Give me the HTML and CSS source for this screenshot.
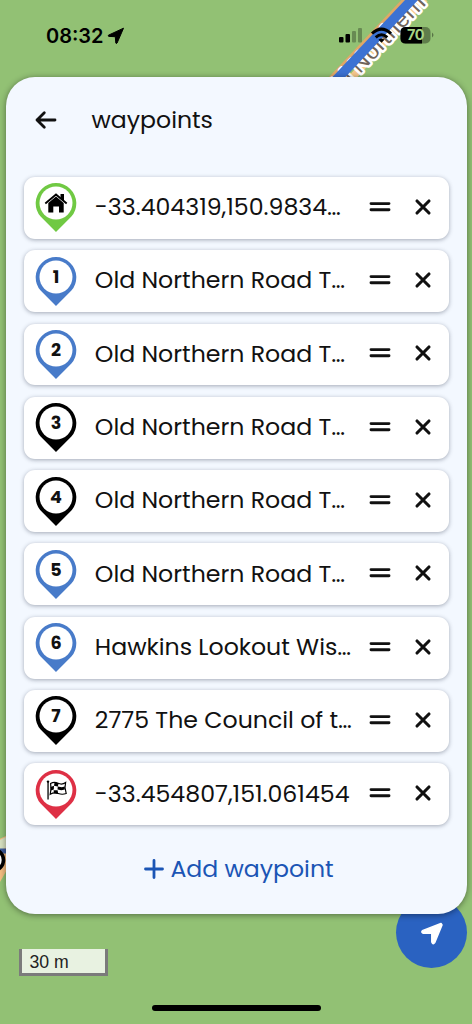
FILE: index.html
```html
<!DOCTYPE html>
<html lang="en">
<head>
<meta charset="utf-8">
<title>Waypoints</title>
<link rel="stylesheet" href="styles.css">
</head>
<body>
<svg class="defs" width="0" height="0" aria-hidden="true">
  <symbol id="pin" viewBox="0 0 42 51"><path d="M21 50 5.600 34.600A20.300 20.300 0 1 1 36.400 34.600Z" fill="currentColor"/><circle cx="21" cy="21" r="16.500" fill="#fff"/></symbol>
  <symbol id="drag" viewBox="0 0 22 12"><path d="M2 2.600H20M2 8.800H20" stroke="#111" stroke-width="2.900" stroke-linecap="round"/></symbol>
  <symbol id="close" viewBox="0 0 18 18"><path d="M3 3 15 15M15 3 3 15" stroke="#111" stroke-width="3.100" stroke-linecap="round"/></symbol>
</svg>
<div class="screen">
  <svg class="map" viewBox="0 0 472 1024">
    <path d="M326 83 405 -1" stroke="#e0a866" stroke-width="4"/>
    <path d="M347 83 425 -1" stroke="#f7c98e" stroke-width="7"/>
    <g class="road-name" transform="translate(356.500 78) rotate(-46.500)"><text x="-1" text-anchor="end">Old</text><text x="5">Northern</text></g>
    <path d="M330.500 86 420 -9" stroke="#3c72d3" stroke-width="9.500"/>
    <path d="M-3 840 8 835V868L0 882Z" fill="#f3bc80"/>
    <path d="M-2 841 8 836V847L-2 851Z" fill="#d6e0c0"/>
    <path d="M0 851H9" stroke="#3d5c9c" stroke-width="5"/>
    <circle cx="-7" cy="860" r="10.500" fill="#fff" stroke="#000" stroke-width="3.600"/>
  </svg>
  <header class="status">
    <span class="time">08:32</span>
    <svg class="arrow" width="18" height="18" viewBox="0 0 18 18"><path d="M16.500 1.200 1.400 8.200Q.7 9 1.900 9.400L8.300 9.700 8.800 16Q9.300 17.200 10.100 16Z" stroke="#000" stroke-linejoin="round"/></svg>
    <svg class="signals" width="98" height="24" viewBox="0 0 98 24">
      <rect x="1" y="13" width="4.500" height="5.500" rx="1"/><rect x="7.500" y="10" width="4.500" height="8.500" rx="1"/>
      <g opacity=".28"><rect x="14" y="7" width="4" height="11.500" rx="1"/><rect x="20" y="4" width="4" height="14.500" rx="1"/></g>
      <g fill="none" stroke="#000" stroke-width="3"><path d="M34 9.500Q43.500 .8 53 9.500M37.700 13.300Q43.500 8.300 49.300 13.300"/></g><path d="M40.500 15.700Q43.500 13.200 46.500 15.700L43.500 18.800Z"/>
      <rect x="62.500" y="3" width="30" height="16.500" rx="5" opacity=".35"/><path d="M67.500 3H84V19.500H67.500Q62.500 19.500 62.500 14.500V8Q62.500 3 67.500 3Z"/><path d="M94 8.500Q97 11 94 13.500Z" opacity=".4"/>
      <text class="battery" x="69" y="16.300">70</text>
    </svg>
  </header>
  <main class="panel">
    <div class="title">
      <svg width="22" height="20" viewBox="0 0 22 20"><path d="M20 10H2M9.300 2.700 2 10 9.300 17.300" fill="none" stroke="#111" stroke-width="2.800" stroke-linecap="round" stroke-linejoin="round"/></svg>
      <h1>waypoints</h1>
    </div>
    <div class="list">
      <div class="card"><svg class="pin green" viewBox="0 0 42 51"><use href="#pin"/><g class="ink"><path d="m10.300 21.400 10.700-9 10.700 9" fill="none" stroke="#000" stroke-width="1.900"/><path d="M25.500 12H29V19L25.500 16ZM21 14.500 28.700 21V30.500H24V24.500H18.300V30.500H13.300V21Z"/></g></svg><span class="name">-33.404319,150.9834…</span><svg class="drag"><use href="#drag"/></svg><svg class="close"><use href="#close"/></svg></div>
      <div class="card"><svg class="pin blue" viewBox="0 0 42 51"><use href="#pin"/><text x="21" y="27">1</text></svg><span class="name">Old Northern Road T…</span><svg class="drag"><use href="#drag"/></svg><svg class="close"><use href="#close"/></svg></div>
      <div class="card"><svg class="pin blue" viewBox="0 0 42 51"><use href="#pin"/><text x="21" y="27">2</text></svg><span class="name">Old Northern Road T…</span><svg class="drag"><use href="#drag"/></svg><svg class="close"><use href="#close"/></svg></div>
      <div class="card"><svg class="pin" viewBox="0 0 42 51"><use href="#pin"/><text x="21" y="27">3</text></svg><span class="name">Old Northern Road T…</span><svg class="drag"><use href="#drag"/></svg><svg class="close"><use href="#close"/></svg></div>
      <div class="card"><svg class="pin" viewBox="0 0 42 51"><use href="#pin"/><text x="21" y="27">4</text></svg><span class="name">Old Northern Road T…</span><svg class="drag"><use href="#drag"/></svg><svg class="close"><use href="#close"/></svg></div>
      <div class="card"><svg class="pin blue" viewBox="0 0 42 51"><use href="#pin"/><text x="21" y="27">5</text></svg><span class="name">Old Northern Road T…</span><svg class="drag"><use href="#drag"/></svg><svg class="close"><use href="#close"/></svg></div>
      <div class="card"><svg class="pin blue" viewBox="0 0 42 51"><use href="#pin"/><text x="21" y="27">6</text></svg><span class="name">Hawkins Lookout Wis…</span><svg class="drag"><use href="#drag"/></svg><svg class="close"><use href="#close"/></svg></div>
      <div class="card"><svg class="pin" viewBox="0 0 42 51"><use href="#pin"/><text x="21" y="27">7</text></svg><span class="name">2775 The Council of t…</span><svg class="drag"><use href="#drag"/></svg><svg class="close"><use href="#close"/></svg></div>
      <div class="card"><svg class="pin red" viewBox="0 0 42 51"><use href="#pin"/><g class="ink"><circle cx="13" cy="12.600" r="1.200"/><path d="M12.400 12.500h1.300v18h-1.300Z"/><path d="M15.600 14.500q3.500-2 7.500-.2t7.500-.8l-.6 5 1.200 6q-4 1.500-8 0t-8 .8l.8-5.500Z" fill="none" stroke="#000" stroke-width="1.200"/><path d="m19.500 13.500 4.200.8-.9 3.200-3.800-.7ZM15.500 18l3.500-1.300-.2 3.800-3 1ZM22.800 17.500l4 .8 3-.8v3l-3.500.8-3.800-.8ZM18.600 21.300l4-.1.600 3.600-4.300-.5Z"/></g></svg><span class="name">-33.454807,151.061454</span><svg class="drag"><use href="#drag"/></svg><svg class="close"><use href="#close"/></svg></div>
    </div>
    <div class="add"><svg width="20" height="20" viewBox="0 0 20 20"><path d="M10 1.500V18.500M1.500 10H18.500" stroke="#1b55b5" stroke-width="2.800" stroke-linecap="round"/></svg><span>Add waypoint</span></div>
  </main>
  <div class="scale">30 m</div>
  <div class="locate"><svg width="26" height="26" viewBox="0 0 26 26"><path d="M22 3.500 4 10.400Q1.500 12 4.200 13.200H12.800V22Q14 25 15.700 22.600L23 5Z" fill="#fff" stroke="#fff" stroke-width="1.500" stroke-linejoin="round"/></svg></div>
  <div class="home"></div>
</div>
</body>
</html>
```

FILE: styles.css
```css
* { box-sizing: border-box; }
body { margin: 0; font-family: Poppins, Inter, sans-serif; color: #111; }
svg { display: block; flex: none; }
.defs { position: absolute; }
.screen { position: relative; width: 472px; height: 1024px; overflow: hidden; background: #92c174; display: flex; flex-direction: column; }
.map { position: absolute; inset: 0; width: 472px; height: 1024px; }
.road-name { font: 23.5px "Liberation Sans", sans-serif; letter-spacing: .8px; fill: #70645a; stroke: #fff; stroke-width: 5px; stroke-linejoin: round; paint-order: stroke; }
.status { position: relative; height: 77px; flex: none; display: flex; padding: 24px 36.500px 0 46px; color: #000; }
.time { width: 58px; font: 600 20px/24px Inter, sans-serif; white-space: nowrap; }
.arrow { margin: 2.500px 0 0 3px; }
.signals { margin-left: auto; width: 98px; }
.battery { font: 700 14.5px Inter, sans-serif; fill: #a6d385; letter-spacing: -.5px; }
.panel { position: relative; z-index: 2; width: 461px; height: 836.500px; margin-left: 6px; flex: none; padding: 0 18px 0 17.500px; border-radius: 29px; background: #f3f8ff; box-shadow: 0 1px 6px rgba(0, 0, 0, .45); }
.title { height: 100px; display: flex; align-items: center; padding: 0 0 14px 11px; }
h1 { margin: 0 0 0 35px; font-size: 23.6px; font-weight: 400; line-height: 30px; }
.list { display: grid; gap: 11.500px; }
.card { height: 61.800px; display: flex; align-items: center; padding: 0 17px 0 11.800px; border-radius: 11px; background: #fff; box-shadow: 0 1px 4px rgba(40, 50, 70, .4); }
.pin { width: 42px; height: 51px; margin-top: 0; color: #000; }
.pin text { font: 700 17.5px Poppins, Inter, sans-serif; text-anchor: middle; fill: #111; }
.ink { fill: #000; }
.green { color: #70c943; }
.blue { color: #487bc9; }
.red { color: #de3045; }
.name { width: 257px; margin: -1.500px 0 0 17.500px; font-size: 23.65px; line-height: 34px; white-space: nowrap; }
.drag { width: 22px; height: 12px; margin-left: auto; margin-top: -2px; }
.close { width: 18px; height: 18px; margin-left: 23px; margin-top: -2px; }
.add { display: flex; align-items: center; justify-content: center; gap: 6.500px; height: 87px; padding-left: 5px; color: #1b55b5; font-size: 23.6px; }
.scale { position: relative; width: 89px; height: 27px; margin: 35.500px 0 0 19px; padding-left: 7.500px; border: solid #7b7b7b; border-width: 0 3px 3px; background: #e8f2e1; color: #222; font: 17.7px/26px "Liberation Sans", sans-serif; }
.locate { position: absolute; z-index: 1; left: 396px; top: 897px; width: 71px; height: 71px; border-radius: 50%; background: #2a62c1; display: grid; place-items: center; }
.home { position: absolute; left: 152px; top: 1005px; width: 169px; height: 6px; border-radius: 3px; background: #000; }
```
